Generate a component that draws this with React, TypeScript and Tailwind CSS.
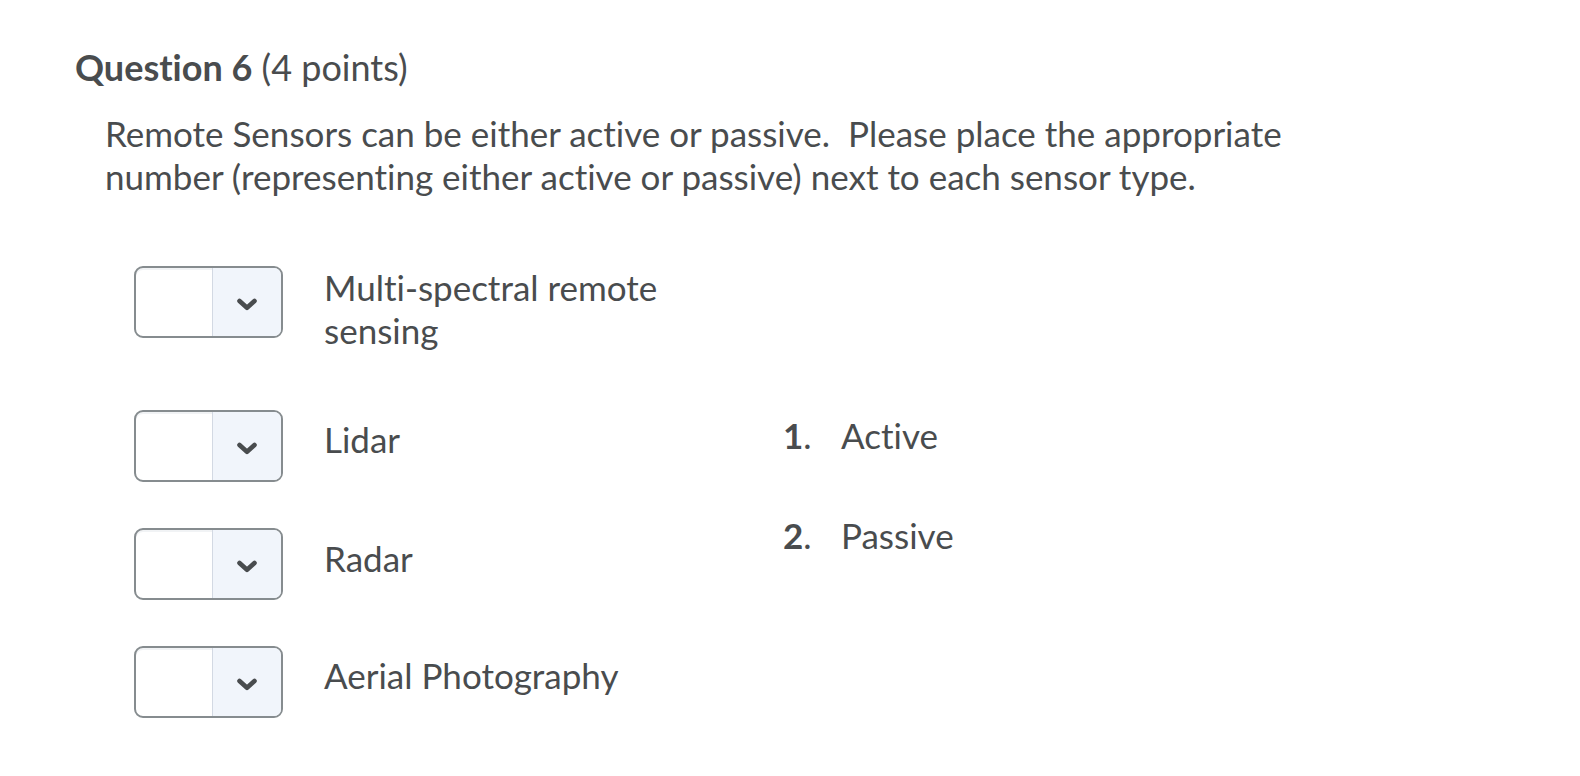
import { useState } from "react";

const ROWS = [
  { label: "Multi-spectral remote sensing", rowH: "h-[144px]", pad: "pt-0" },
  { label: "Lidar", rowH: "h-[118px]", pad: "pt-[8px]" },
  { label: "Radar", rowH: "h-[118px]", pad: "pt-[9px]" },
  { label: "Aerial Photography", rowH: "h-[118px]", pad: "pt-[8px]" },
];

const CHOICES = ["Active", "Passive"];

function Chevron() {
  return (
    <svg width="24" height="16" viewBox="0 0 24 16" fill="none" className="mt-[5px]">
      <polyline
        points="4.5,4 12,10.8 19.5,4"
        stroke="#494c4e"
        strokeWidth="4.6"
        strokeLinecap="round"
        strokeLinejoin="round"
      />
    </svg>
  );
}

function MatchSelect() {
  const [value, setValue] = useState("");
  return (
    <div className="relative flex h-[72px] w-[149px] shrink-0 overflow-hidden rounded-[9px] border-2 border-[#868c8f] bg-white shadow-[inset_0_2px_0_0_#f1f3f5]">
      <div className="flex w-[76px] items-center justify-center text-[30px] text-[#494c4e]">
        {value}
      </div>
      <div className="flex flex-1 items-center justify-center border-l border-[#d3d9e3] bg-[#f1f5fb]">
        <Chevron />
      </div>
      <select
        aria-label="Choose"
        className="absolute inset-0 cursor-pointer opacity-0"
        value={value}
        onChange={(e) => setValue(e.target.value)}
      >
        <option value=""></option>
        <option value="1">1</option>
        <option value="2">2</option>
      </select>
    </div>
  );
}

export default function App() {
  return (
    <div className="min-h-screen bg-white pl-[75px] pt-[41px] text-[#494c4e] font-['Lato','Noto_Sans',sans-serif] [font-variant-ligatures:none]">
      <h2 className="text-[36px] leading-[52px]">
        <span className="font-bold">Question 6</span> (4 points)
      </h2>

      <p className="mt-[19px] ml-[30px] w-[1220px] text-[35px] leading-[43px]">
        Remote Sensors can be either active or passive.&nbsp; Please place the appropriate number
        (representing either active or passive) next to each sensor type.
      </p>

      <div className="mt-[68px] ml-[59px] flex">
        <div className="flex w-[649px] flex-col">
          {ROWS.map((row) => (
            <div key={row.label} className={`flex items-start gap-[41px] ${row.rowH}`}>
              <MatchSelect />
              <div className={`w-[380px] text-[35px] leading-[43px] ${row.pad}`}>{row.label}</div>
            </div>
          ))}
        </div>

        <ol className="-mt-[60px] flex flex-col justify-center gap-[57px]">
          {CHOICES.map((c, i) => (
            <li key={c} className="flex items-baseline text-[35px] leading-[43px]">
              <span className="w-[58px]">
                <span className="font-bold">{i + 1}</span>.
              </span>
              <span>{c}</span>
            </li>
          ))}
        </ol>
      </div>
    </div>
  );
}
